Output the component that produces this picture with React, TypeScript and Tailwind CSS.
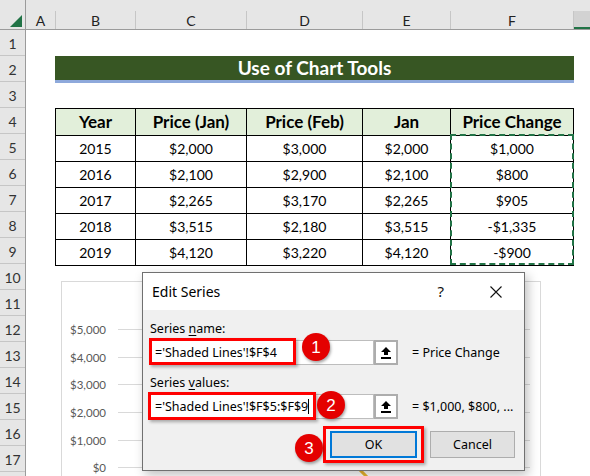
import React from 'react';

const colHeaders = [
  { label: 'A', w: 'w-[30px]' },
  { label: 'B', w: 'w-[80px]' },
  { label: 'C', w: 'w-[111px]' },
  { label: 'D', w: 'w-[116px]' },
  { label: 'E', w: 'w-[88px]' },
  { label: 'F', w: 'w-[123px]' },
];

const tableCols = ['w-[80px]', 'w-[111px]', 'w-[116px]', 'w-[88px]', 'w-[123px]'];

const rows = [
  ['2015', '$2,000', '$3,000', '$2,000', '$1,000'],
  ['2016', '$2,100', '$2,900', '$2,100', '$800'],
  ['2017', '$2,265', '$3,170', '$2,265', '$905'],
  ['2018', '$3,515', '$2,180', '$3,515', '-$1,335'],
  ['2019', '$4,120', '$3,220', '$4,120', '-$900'],
];

const axis = ['$5,000', '$4,000', '$3,000', '$2,000', '$1,000', '$0'];

function CollapseButton() {
  return (
    <div className="w-[24px] h-[25px] border-2 border-[#adadad] bg-white flex items-center justify-center">
      <svg width="10" height="12" viewBox="0 0 10 12">
        <polygon points="5,0 10,5 7,5 7,8 3,8 3,5 0,5" fill="#000" />
        <rect x="0" y="10" width="10" height="2" fill="#000" />
      </svg>
    </div>
  );
}

function Marker({ n, cls }: { n: string; cls: string }) {
  return (
    <div
      className={`absolute w-[28px] h-[28px] rounded-full bg-[#e40000] shadow-[1px_2px_3px_rgba(0,0,0,0.35)] flex items-center justify-center text-white text-[17px] leading-none font-['Liberation_Sans',sans-serif] ${cls}`}
    >
      {n}
    </div>
  );
}

export default function App() {
  return (
    <div className="relative w-[590px] h-[476px] overflow-hidden bg-white font-['Lato',sans-serif] text-black select-none">
      {/* column headers */}
      <div className="flex h-[30px] bg-[#e6e6e6] border-b border-[#9b9b9b]">
        <div className="w-[26px] h-full border-r border-[#9b9b9b] relative">
          <svg className="absolute left-[10px] top-[15px]" width="12" height="12" viewBox="0 0 12 12">
            <polygon points="12,0 12,12 0,12" fill="#217346" />
          </svg>
        </div>
        {colHeaders.map((c) => (
          <div key={c.label} className={`${c.w} h-full pt-[11px]`}>
            <div className="h-full border-r border-[#c6c6c6] flex items-center justify-center text-[14px] text-[#222]">
              {c.label}
            </div>
          </div>
        ))}
        <div className="flex-1 h-full pt-[11px]">
          <div className="h-full bg-[#d2d2d2] border-b-2 border-[#217346]" />
        </div>
      </div>

      <div className="flex">
        {/* row headers */}
        <div className="w-[26px] flex flex-col bg-[#e6e6e6] border-r border-[#9b9b9b]">
          {Array.from({ length: 18 }, (_, i) => (
            <div
              key={i}
              className="h-[26px] shrink-0 border-b border-[#c6c6c6] flex items-end justify-center pb-[2px] text-[14px] leading-[18px] text-[#333]"
            >
              {i < 17 ? i + 1 : ''}
            </div>
          ))}
        </div>

        {/* sheet */}
        <div className="flex-1 flex flex-col pl-[29px]">
          <div className="h-[26px]" />
          <div className="w-[519px] h-[27px] bg-[#375623] border-b-[3px] border-[#8ea9db] flex items-center justify-center text-white font-bold text-[19px]">
            Use of Chart Tools
          </div>
          <div className="h-[25px]" />
          <div className="w-[519px] border-l border-t border-black">
            <div className="flex bg-[#e2efda]">
              {['Year', 'Price (Jan)', 'Price (Feb)', 'Jan', 'Price Change'].map((h, i) => (
                <div
                  key={h}
                  className={`${tableCols[i]} h-[27px] border-r border-b border-black flex items-center justify-center font-bold text-[17px]`}
                >
                  {h}
                </div>
              ))}
            </div>
            {rows.map((r) => (
              <div key={r[0]} className="flex">
                {r.map((v, i) => (
                  <div
                    key={i}
                    className={`${tableCols[i]} h-[26px] border-r border-b border-black flex items-center justify-center text-[14px]`}
                  >
                    {v}
                  </div>
                ))}
              </div>
            ))}
          </div>
        </div>
      </div>

      {/* copy marquee on F5:F9 */}
      <div className="absolute left-[450px] top-[134px] w-[124px] h-[131px] border-2 border-dashed border-[#217346]" />

      {/* chart object */}
      <div className="absolute left-[61px] top-[281px] w-[480px] h-[200px] bg-white border border-[#d9d9d9] pt-[34px] pr-[10px]">
        {axis.map((a) => (
          <div key={a} className="h-[27.6px] flex items-center">
            <div className="w-[44px] text-right text-[11.5px] text-[#595959]">{a}</div>
            <div className="ml-[12px] flex-1 h-px bg-[#d9d9d9]" />
          </div>
        ))}
        <svg className="absolute left-0 top-0" width="480" height="200" viewBox="0 0 480 200">
          <line x1="290" y1="180" x2="310" y2="200" stroke="#e9b52f" strokeWidth="3" />
        </svg>
      </div>

      {/* Edit Series dialog */}
      <div className="absolute left-[142px] top-[272px] w-[383px] h-[199px] border border-[#707070] bg-[#f0f0f0] shadow-[3px_4px_10px_rgba(0,0,0,0.25)] font-['Noto_Sans',sans-serif]">
        <div className="h-[37px] bg-white flex items-center pl-[9px] pr-[22px]">
          <div className="flex-1 text-[14px]">Edit Series</div>
          <div className="text-[15px] text-[#111] mr-[46px]">?</div>
          <svg width="12" height="12" viewBox="0 0 12 12">
            <path d="M0.5 0.5 L11.5 11.5 M11.5 0.5 L0.5 11.5" stroke="#111" strokeWidth="1.1" />
          </svg>
        </div>

        <div className="pl-[7px] pr-[9px] pt-[10px] text-[12.5px] leading-[17px]">
          <div>
            Series <u className="underline-offset-2">n</u>ame:
          </div>
          <div className="mt-[3px] flex items-center">
            <div className="w-[224px] h-[25px] bg-white border border-[#bdbdbd] flex items-center pl-[4px]">
              ='Shaded Lines'!$F$4
            </div>
            <CollapseButton />
            <div className="ml-[14px]">= Price Change</div>
          </div>

          <div className="mt-[9px]">
            Series <u className="underline-offset-2">v</u>alues:
          </div>
          <div className="mt-[3px] flex items-center">
            <div className="w-[224px] h-[25px] bg-white border border-[#bdbdbd] flex items-center pl-[4px]">
              ='Shaded Lines'!$F$5:$F$9
              <span className="w-px h-[15px] bg-black" />
            </div>
            <CollapseButton />
            <div className="ml-[14px]">= $1,000, $800, ...</div>
          </div>

          <div className="mt-[12px] flex justify-end gap-[13px]">
            <div className="w-[87px] h-[27px] bg-[#e1e1e1] border-2 border-[#0078d7] flex items-center justify-center">
              OK
            </div>
            <div className="w-[85px] h-[27px] bg-[#e1e1e1] border border-[#adadad] flex items-center justify-center">
              Cancel
            </div>
          </div>
        </div>

        {/* annotations */}
        <div className="absolute left-[6px] top-[65px] w-[147px] h-[27px] border-[3px] border-[#ff0000] shadow-[2px_2px_3px_rgba(0,0,0,0.3)]" />
        <div className="absolute left-[5px] top-[119px] w-[168px] h-[28px] border-[3px] border-[#ff0000] shadow-[2px_2px_3px_rgba(0,0,0,0.3)]" />
        <div className="absolute left-[180px] top-[153px] w-[101px] h-[37px] border-[3px] border-[#ff0000] shadow-[2px_2px_3px_rgba(0,0,0,0.3)]" />
        <Marker n="1" cls="left-[159px] top-[60px]" />
        <Marker n="2" cls="left-[174px] top-[118px]" />
        <Marker n="3" cls="left-[152px] top-[161px]" />
      </div>
    </div>
  );
}
